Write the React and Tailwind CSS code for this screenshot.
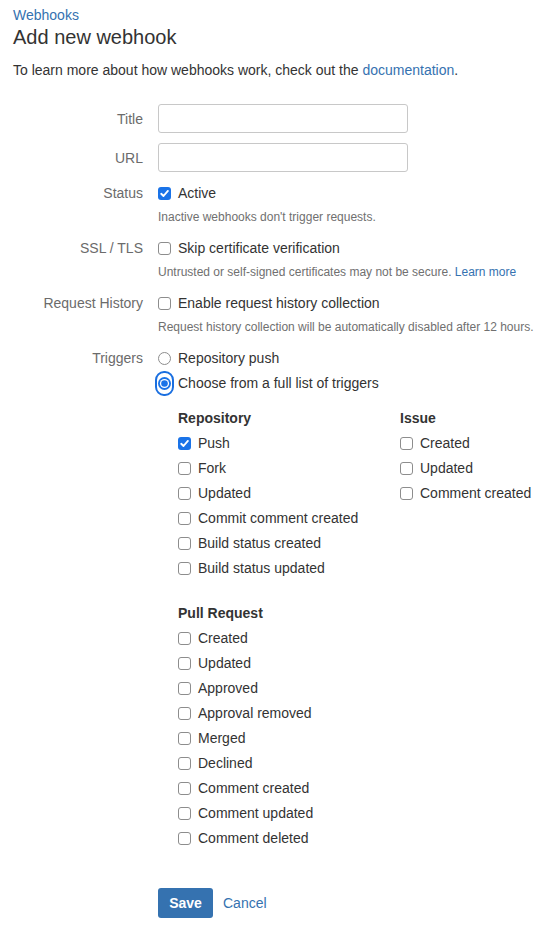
import React from "react";

const font = { fontFamily: '"Liberation Sans", Arial, sans-serif' };

function Check({ checked }) {
  if (checked) {
    return (
      <span className="flex h-[13px] w-[13px] shrink-0 items-center justify-center rounded-[3px] bg-[#1a73e8]">
        <svg width="11" height="11" viewBox="0 0 11 11">
          <path d="M2.2 5.8 L4.5 8 L8.9 2.9" fill="none" stroke="#fff" strokeWidth="1.9" strokeLinecap="round" strokeLinejoin="round" />
        </svg>
      </span>
    );
  }
  return <span className="block h-[13px] w-[13px] shrink-0 rounded-[3px] border border-[#8d8d8d] bg-white" />;
}

function Radio({ checked }) {
  if (checked) {
    return (
      <span className="relative flex h-[13px] w-[13px] shrink-0 items-center justify-center">
        <span className="absolute left-[-3px] top-[-6px] h-[25px] w-[19px] rounded-[9px] border-2 border-[#1a6fe0]" />
        <svg width="13" height="13" viewBox="0 0 13 13">
          <circle cx="6.5" cy="6.5" r="6.5" fill="#1a73e8" />
          <circle cx="6.5" cy="6.5" r="4.6" fill="#fff" />
          <circle cx="6.5" cy="6.5" r="3.3" fill="#1a73e8" />
        </svg>
      </span>
    );
  }
  return <span className="block h-[13px] w-[13px] shrink-0 rounded-full border border-[#8d8d8d] bg-white" />;
}

function CheckRow({ label, checked }) {
  return (
    <div className="flex h-[20px] items-center gap-[7px] text-[14px] text-[#333]">
      <Check checked={checked} />
      <span>{label}</span>
    </div>
  );
}

function Row({ label, children, className = "" }) {
  return (
    <div className={"flex " + className}>
      <div className="w-[130px] shrink-0 text-right text-[14px] leading-[20px] text-[#6b6b6b]">{label}</div>
      <div className="ml-[15px] flex-1">{children}</div>
    </div>
  );
}

export default function App() {
  const repo = ["Fork", "Updated", "Commit comment created", "Build status created", "Build status updated"];
  const issue = ["Created", "Updated", "Comment created"];
  const pr = ["Created", "Updated", "Approved", "Approval removed", "Merged", "Declined", "Comment created", "Comment updated", "Comment deleted"];
  return (
    <div style={font} className="min-h-[930px] bg-white px-[13px] pt-[5px] text-[#333]">
      <a className="block text-[14px] leading-[20px] text-[#3572b0]">Webhooks</a>
      <h2 className="text-[20px] leading-[24px] text-[#333]">Add new webhook</h2>
      <p className="mt-[11px] text-[14px] leading-[20px]">
        To learn more about how webhooks work, check out the <a className="text-[#3572b0]">documentation</a>.
      </p>

      <Row label="Title" className="mt-[24px] items-center">
        <div className="h-[29px] w-[250px] rounded-[3px] border border-[#c8c8c8] bg-white" />
      </Row>
      <Row label="URL" className="mt-[10px] items-center">
        <div className="h-[29px] w-[250px] rounded-[3px] border border-[#c8c8c8] bg-white" />
      </Row>

      <Row label="Status" className="mt-[11px]">
        <CheckRow label="Active" checked />
        <div className="mt-[6px] text-[12px] leading-[16px] text-[#707070]">Inactive webhooks don't trigger requests.</div>
      </Row>

      <Row label="SSL / TLS" className="mt-[13px]">
        <CheckRow label="Skip certificate verification" />
        <div className="mt-[6px] text-[12px] leading-[16px] text-[#707070]">
          Untrusted or self-signed certificates may not be secure. <a className="text-[#3572b0]">Learn more</a>
        </div>
      </Row>

      <Row label="Request History" className="mt-[13px]">
        <CheckRow label="Enable request history collection" />
        <div className="mt-[6px] whitespace-nowrap text-[12px] leading-[16px] text-[#707070]">
          Request history collection will be automatically disabled after 12 hours.
        </div>
      </Row>

      <Row label="Triggers" className="mt-[13px]">
        <div className="flex flex-col gap-[5px]">
          <div className="flex h-[20px] items-center gap-[7px] text-[14px]">
            <Radio />
            <span>Repository push</span>
          </div>
          <div className="flex h-[20px] items-center gap-[7px] text-[14px]">
            <Radio checked />
            <span>Choose from a full list of triggers</span>
          </div>
        </div>

        <div className="ml-[20px] mt-[15px] flex">
          <div className="w-[222px]">
            <div className="text-[14px] font-bold leading-[20px]">Repository</div>
            <div className="mt-[5px] flex flex-col gap-[5px]">
              <CheckRow label="Push" checked />
              {repo.map((r) => (
                <CheckRow key={r} label={r} />
              ))}
            </div>
          </div>
          <div>
            <div className="text-[14px] font-bold leading-[20px]">Issue</div>
            <div className="mt-[5px] flex flex-col gap-[5px]">
              {issue.map((r) => (
                <CheckRow key={r} label={r} />
              ))}
            </div>
          </div>
        </div>

        <div className="ml-[20px] mt-[25px]">
          <div className="text-[14px] font-bold leading-[20px]">Pull Request</div>
          <div className="mt-[5px] flex flex-col gap-[5px]">
            {pr.map((r) => (
              <CheckRow key={r} label={r} />
            ))}
          </div>
        </div>

        <div className="mt-[40px] flex items-center gap-[10px]">
          <button className="h-[30px] w-[55px] rounded-[3px] bg-[#3572b0] text-[14px] font-bold text-white">Save</button>
          <a className="text-[14px] text-[#3572b0]">Cancel</a>
        </div>
      </Row>
    </div>
  );
}
